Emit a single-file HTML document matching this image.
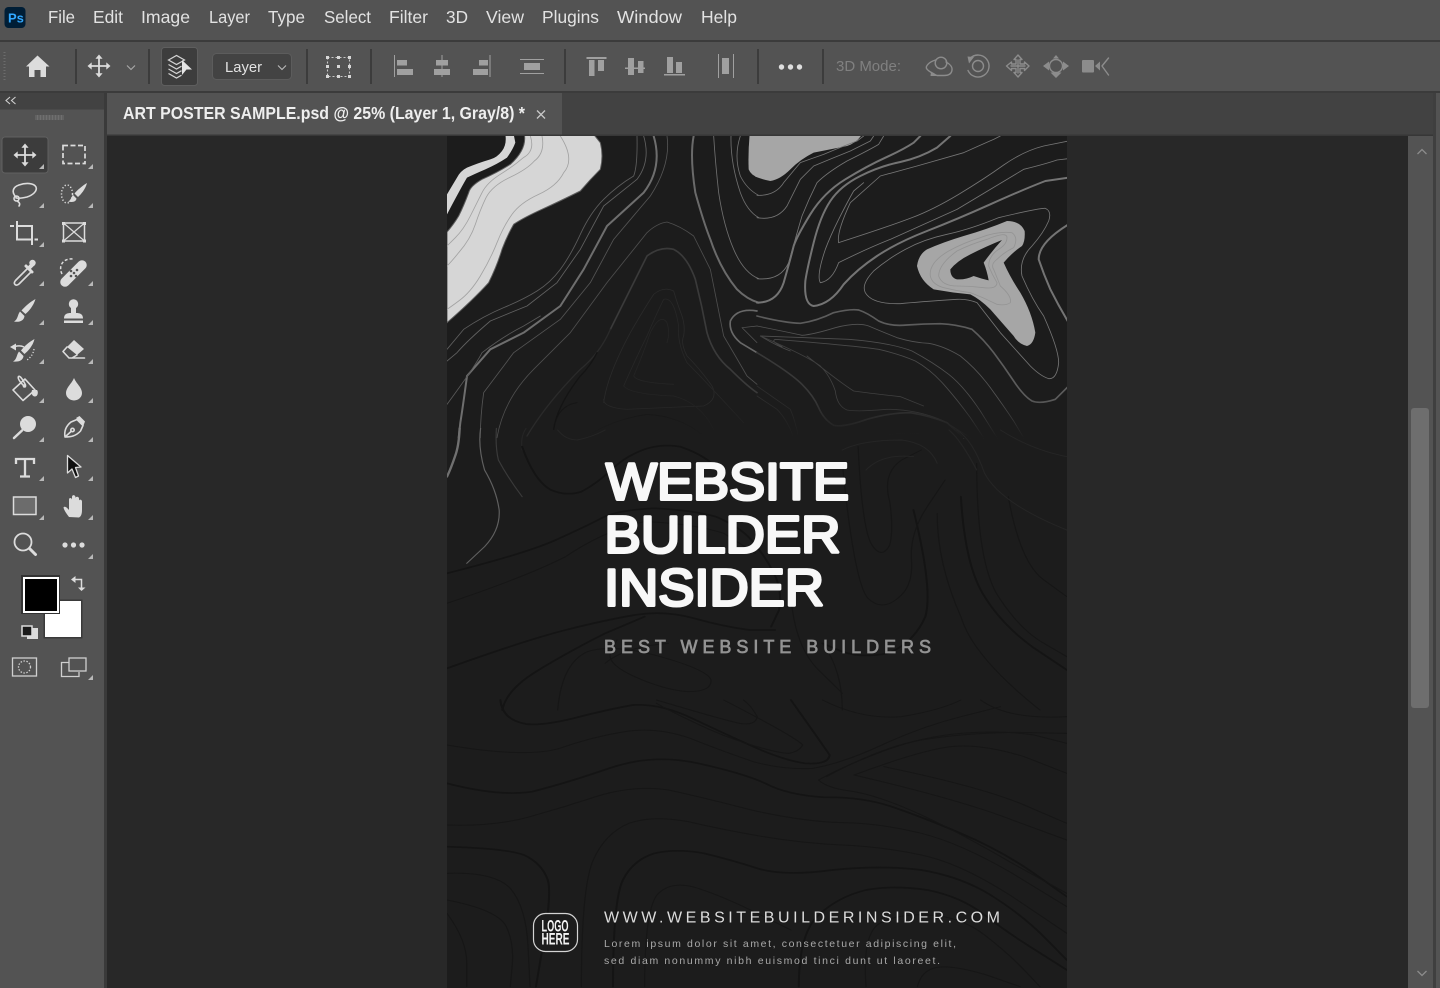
<!DOCTYPE html>
<html><head><meta charset="utf-8"><title>ART POSTER SAMPLE.psd</title>
<style>
html,body{margin:0;padding:0;background:#535353;overflow:hidden;width:1440px;height:988px}
svg{display:block;font-family:"Liberation Sans",sans-serif}
.l{fill:none;stroke-linecap:round;stroke-linejoin:round}
.ic{fill:none;stroke:#dcdcdc;stroke-width:1.6;stroke-linejoin:round;stroke-linecap:round}
.f{fill:#dcdcdc;stroke:none}
.a{fill:#a0a0a0}
.m{fill:#e2e2e2;font-size:17.5px}
.d{fill:none;stroke:#8c8c8c;stroke-width:1.4;stroke-linejoin:round;stroke-linecap:round}
.df{fill:#8c8c8c}
</style></head><body>
<svg width="1440" height="988" viewBox="0 0 1440 988" xmlns="http://www.w3.org/2000/svg">
<defs>
<path id="tri" d="M5 0V5H0Z" fill="#b8b8b8"/>
<g id="mv"><path d="M-8 0H8M0-8V8" fill="none" stroke="#dcdcdc" stroke-width="1.8"/><path d="M0-11.5l3.6 4.2h-7.2zM0 11.5l3.6-4.2h-7.2zM-11.5 0l4.2-3.6v7.2zM11.5 0l-4.2-3.6v7.2z" fill="#dcdcdc"/></g>
<clipPath id="pc"><rect x="0" y="0" width="620" height="852"/></clipPath>
<linearGradient id="fade" x1="0" y1="0" x2="0" y2="1"><stop offset="0" stop-color="#1c1c1c" stop-opacity="0"/><stop offset="1" stop-color="#1c1c1c" stop-opacity="1"/></linearGradient>
</defs>

<!-- chrome backgrounds -->
<rect width="1440" height="988" fill="#535353"/>
<rect x="0" y="40" width="1440" height="2" fill="#3b3b3b"/>
<rect x="0" y="91" width="1440" height="2" fill="#3b3b3b"/>
<rect x="107" y="93" width="1326" height="42" fill="#424242"/>
<rect x="107" y="135" width="1301" height="853" fill="#282828"/>
<rect x="104" y="93" width="3" height="895" fill="#3a3a3a"/>
<rect x="1433" y="93" width="3" height="895" fill="#3f3f3f"/>
<rect x="0" y="93" width="104" height="16" fill="#424242"/>
<rect x="0" y="109" width="104" height="1" fill="#4a4a4a"/>

<!-- menu -->
<rect x="4.5" y="7" width="21" height="21" rx="4" fill="#001e36"/>
<text x="8" y="22.5" font-size="13" font-weight="700" fill="#31a8ff">Ps</text>
<g class="m">
<text x="48" y="23" textLength="27" lengthAdjust="spacingAndGlyphs">File</text>
<text x="93" y="23" textLength="30" lengthAdjust="spacingAndGlyphs">Edit</text>
<text x="141" y="23" textLength="49" lengthAdjust="spacingAndGlyphs">Image</text>
<text x="209" y="23" textLength="41" lengthAdjust="spacingAndGlyphs">Layer</text>
<text x="268" y="23" textLength="37" lengthAdjust="spacingAndGlyphs">Type</text>
<text x="324" y="23" textLength="47" lengthAdjust="spacingAndGlyphs">Select</text>
<text x="389" y="23" textLength="39" lengthAdjust="spacingAndGlyphs">Filter</text>
<text x="446" y="23" textLength="22" lengthAdjust="spacingAndGlyphs">3D</text>
<text x="486" y="23" textLength="38" lengthAdjust="spacingAndGlyphs">View</text>
<text x="542" y="23" textLength="57" lengthAdjust="spacingAndGlyphs">Plugins</text>
<text x="617" y="23" textLength="65" lengthAdjust="spacingAndGlyphs">Window</text>
<text x="701" y="23" textLength="36" lengthAdjust="spacingAndGlyphs">Help</text>
</g>

<!-- options bar -->
<path d="M4.5 52V81" stroke="#6c6c6c" stroke-width="2" stroke-dasharray="1 2"/>
<path d="M26 66.5L37.5 55.5L49.5 66.5H46V77H40.5V70H34.5V77H29V66.5Z" class="f"/>
<g fill="#3c3c3c"><rect x="75" y="49" width="2" height="35"/><rect x="148" y="49" width="2" height="35"/><rect x="306" y="49" width="2" height="35"/><rect x="370" y="49" width="2" height="35"/><rect x="564" y="49" width="2" height="35"/><rect x="757" y="49" width="2" height="35"/><rect x="822" y="49" width="2" height="35"/></g>
<use href="#mv" x="99" y="66"/>
<path d="M127 65.5l4 4 4-4" fill="none" stroke="#aaa" stroke-width="1.1"/>
<rect x="161.5" y="47.5" width="36" height="38" rx="3" fill="#3d3d3d" stroke="#5e5e5e"/>
<g fill="none" stroke="#d4d4d4" stroke-width="1.2"><path d="M168.5 60l8-4.500 8 4.500-8 4.500z"/><path d="M168.500 64.500l8 4.500 5-2.800M168.500 69l8 4.500 5-2.800M168.500 73.500l8 4.500 5-2.800"/></g>
<path d="M182 60L192 69.500H186.500L182 75Z" fill="#e6e6e6"/>
<rect x="212.500" y="53.500" width="79" height="26" rx="4" fill="#434343" stroke="#5c5c5c"/>
<text x="225" y="72" font-size="15" fill="#e2e2e2" textLength="37" lengthAdjust="spacingAndGlyphs">Layer</text>
<path d="M278 65.500l4 4 4-4" fill="none" stroke="#bbb" stroke-width="1.1"/>
<g><rect x="327.500" y="57.500" width="22" height="19" fill="none" stroke="#c8c8c8" stroke-width="1.100" stroke-dasharray="2 2"/><g fill="#d8d8d8"><rect x="326" y="56" width="3" height="3"/><rect x="337" y="56" width="3" height="3"/><rect x="348" y="56" width="3" height="3"/><rect x="326" y="65" width="3" height="3"/><rect x="337" y="65" width="3" height="3"/><rect x="348" y="65" width="3" height="3"/><rect x="326" y="75" width="3" height="3"/><rect x="337" y="75" width="3" height="3"/><rect x="348" y="75" width="3" height="3"/></g></g>
<g class="a">
<rect x="394" y="55" width="1" height="22"/><rect x="397" y="60" width="10" height="5.500"/><rect x="397" y="69" width="16" height="6"/>
<rect x="441.500" y="55" width="1" height="22"/><rect x="436" y="60" width="12" height="5.500"/><rect x="434" y="69" width="16" height="6"/>
<rect x="489.500" y="55" width="1" height="22"/><rect x="479" y="60" width="9" height="5.500"/><rect x="473" y="69" width="15" height="6"/>
<rect x="520" y="59" width="24" height="1"/><rect x="520" y="73" width="24" height="1"/><rect x="524" y="63" width="16" height="7"/>
<rect x="586.500" y="57" width="20" height="2"/><rect x="589" y="60" width="5.500" height="16"/><rect x="598" y="60" width="6" height="11"/>
<rect x="625" y="67.500" width="20" height="1.500"/><rect x="628" y="58" width="6" height="17"/><rect x="638" y="61" width="5.500" height="12"/>
<rect x="664" y="74" width="21" height="1.500"/><rect x="667" y="57" width="6" height="16"/><rect x="676" y="62" width="6" height="11"/>
<rect x="718" y="54" width="1" height="24"/><rect x="733" y="54" width="1" height="24"/><rect x="722" y="58" width="7" height="16"/>
</g>
<g fill="#dedede"><circle cx="781.500" cy="67" r="2.700"/><circle cx="790.500" cy="67" r="2.700"/><circle cx="799.500" cy="67" r="2.700"/></g>
<text x="836" y="71" font-size="15" fill="#808080" textLength="65" lengthAdjust="spacingAndGlyphs">3D Mode:</text>
<!-- 3d icons -->
<circle cx="941" cy="63" r="5.800" class="d"/>
<path class="d" d="M935.500 60C929 62 925.500 66 926.500 68.500C928 71 932 73 934 74M946 62C950 64 952.500 67 952 70C951.500 74 948 75.500 944 75.500H937"/>
<path class="df" d="M931 71.500L939 76H930.500Z"/>
<path class="d" d="M970 58.500A11 11 0 1 1 968 70.500"/><circle cx="978" cy="66" r="5.500" class="d"/>
<path class="df" d="M967.500 56.500L969 63.500L974 57Z"/>
<path class="d" d="M1018 55L1022 59.500H1020V64H1024.500V62L1029 66L1024.500 70.500V68.500H1020V72.500H1022L1018 77L1014 72.500H1016V68.500H1011.500V70.500L1006.500 66L1011.500 62V64H1016V59.500H1014ZM1018 60V73M1011 66H1025"/>
<circle cx="1056" cy="66" r="6.500" class="d"/>
<path class="df" d="M1056 55l3 3.500h-6zM1056 78l5.500-5.500h-11zM1043 66l6-4.500v9zM1069 66l-6-4.500v9z"/>
<rect x="1082" y="60" width="12" height="12.500" rx="1" class="df"/>
<path class="df" d="M1095 66l5-4.500v9z"/>
<path class="d" d="M1108.500 58L1102 66L1108.500 75"/>

<!-- tab -->
<rect x="107" y="93" width="455" height="42" fill="#535353"/>
<text x="123" y="119" font-size="17.500" font-weight="700" fill="#eeeeee" textLength="402" lengthAdjust="spacingAndGlyphs">ART POSTER SAMPLE.psd @ 25% (Layer 1, Gray/8) *</text>
<path d="M537 110.500l8 8M545 110.500l-8 8" stroke="#c8c8c8" stroke-width="1.300"/>
<rect x="107" y="134.500" width="1326" height="1.500" fill="#373737"/>
<path d="M10 97l-4 3.500 4 3.500M15.500 97l-4 3.500 4 3.500" fill="none" stroke="#d0d0d0" stroke-width="1.100"/>
<g fill="#6f6f6f"><rect x="35" y="115" width="29" height="5"/></g>
<path d="M36 114.500V120.500M39 114.500V120.500M42 114.500V120.500M45 114.500V120.500M48 114.500V120.500M51 114.500V120.500M54 114.500V120.500M57 114.500V120.500M60 114.500V120.500M63 114.500V120.500" stroke="#535353" stroke-width="1"/>

<!-- scrollbar -->
<rect x="1411" y="408" width="18" height="300" rx="3" fill="#6e6e6e"/>
<path d="M1417.500 154l4.500-4.500 4.500 4.500" fill="none" stroke="#8c8c8c" stroke-width="1.300"/>
<path d="M1417.500 971l4.500 4.500 4.500-4.500" fill="none" stroke="#8c8c8c" stroke-width="1.300"/>

<!-- poster -->
<g transform="translate(447,136)" clip-path="url(#pc)">
<rect width="620" height="852" fill="#1c1c1c"/>
<!-- zoom5 region -->
<g transform="scale(.33333)">
<path fill="#d6d6d6" stroke="#5c5c5c" stroke-width="3" d="M232 -5Q240 40 190 85Q150 110 105 130Q70 150 65 170Q50 210 35 240Q20 265 0 288V560Q80 490 125 440Q150 390 165 340Q180 300 200 265Q230 245 285 220Q340 195 400 165Q430 130 460 100Q470 60 460 20L440 -5Z"/>
<path fill="#d6d6d6" d="M175 -5Q180 25 165 45Q150 65 130 70Q90 82 60 95Q40 105 30 125Q15 150 0 175V235Q45 150 60 125Q80 115 115 100Q150 85 180 65Q198 40 205 20L200 -5Z"/>
<g class="l" stroke="#a2a2a2" stroke-width="2.500">
<path d="M250 0Q265 45 229 65Q200 90 160 115Q120 140 105 170Q90 200 70 240Q50 280 25 305Q10 320 0 330"/>
<path d="M285 0Q295 50 262 75Q240 100 187 125Q135 150 117 185Q100 220 85 265Q70 310 35 350Q15 375 0 390"/>
<path d="M340 0Q385 70 350 110Q330 150 275 175Q220 200 195 235Q170 270 150 320Q130 370 100 420Q70 470 35 495Q15 510 0 520"/>
</g>
<path d="M908 -5Q903 50 905 100Q912 118 935 125L940 -5Z" fill="#a6a6a6"/>
<g class="l">
<path stroke="#5e5e5e" stroke-width="2.500" d="M570 0Q572 90 560 120Q510 150 470 190Q430 230 400 295Q370 360 340 400Q310 440 270 465Q230 490 170 515Q110 540 50 580L0 640"/>
<path stroke="#626262" stroke-width="2.500" d="M590 0Q612 75 570 130Q520 170 470 210Q435 275 400 340Q365 390 330 440Q285 475 240 510Q185 532 130 555Q60 615 30 650L0 675"/>
<path stroke="#6e6e6e" stroke-width="6" d="M620 0Q648 95 590 170Q535 220 480 270Q445 335 410 400Q375 455 340 510Q285 550 230 590Q180 615 130 640Q95 680 60 720Q48 810 40 860L35 905"/>
<path stroke="#555" stroke-width="2.500" d="M660 0Q672 85 610 180Q555 245 500 310Q465 375 430 440Q385 495 340 550Q270 600 200 650Q155 710 110 770Q100 840 100 905"/>
<path stroke="#5a5a5a" stroke-width="2.500" d="M0 805Q85 690 105 650Q170 600 230 570L280 540"/>
<path stroke="#4e4e4e" stroke-width="2.500" d="M150 905Q170 790 260 700Q315 645 370 590Q425 515 480 440Q540 365 600 290Q630 262 660 258Q700 270 740 300Q765 350 790 400Q810 500 830 600Q880 685 900 720L930 745"/>
<path stroke="#3a3a3a" stroke-width="5" d="M490 580Q570 420 600 360Q640 330 680 340Q720 360 745 430Q765 510 780 590Q800 660 850 700Q900 750 930 770"/>
<path stroke="#2a2a2a" stroke-width="4" d="M240 900Q300 800 400 700Q460 650 490 580"/>
<path stroke="#141414" stroke-width="4" d="M320 880Q330 810 400 720Q430 690 450 650"/>
<path stroke="#2a2a2a" stroke-width="2.500" d="M470 800Q480 720 550 590Q590 520 620 475Q650 450 680 465Q690 500 705 540Q715 570 710 600Q700 620 720 660Q760 700 795 750Q815 790 770 810Q640 815 540 820Q470 815 470 790"/>
<path stroke="#272727" stroke-width="2.500" d="M530 750Q565 670 600 600Q630 530 650 490Q680 480 695 570Q690 620 720 680Q770 730 890 860"/>
<path stroke="#252525" stroke-width="2.500" d="M560 720Q590 650 610 590Q640 530 660 560Q670 590 660 620M560 720Q570 740 680 745"/>
<path stroke="#242424" stroke-width="2.500" d="M530 750Q550 775 680 780Q760 800 800 880"/>
<path stroke="#151515" stroke-width="3" d="M320 880Q330 810 390 800M420 900Q500 850 600 835Q700 840 770 900"/>
<path stroke="#6a6a6a" stroke-width="6" d="M740 0Q728 60 745 170Q770 260 790 310Q820 400 870 460Q900 490 935 500"/>
<path stroke="#707070" stroke-width="2.500" d="M800 0Q805 80 815 170Q830 270 860 340Q890 410 935 428"/>
<path stroke="#707070" stroke-width="2.500" d="M852 0Q850 80 880 170Q900 225 935 245"/>
<path stroke="#707070" stroke-width="2.500" d="M880 0Q860 60 880 120Q900 160 935 178"/>
<path stroke="#686868" stroke-width="5" d="M930 525Q870 515 850 555Q845 590 880 620L930 650"/>
<path stroke="#585858" stroke-width="2" d="M885 575L930 570M885 575L930 620"/>
</g>
</g>
<!-- zoom6 region -->
<g transform="translate(310,0) scale(.33333)">
<path fill="#a6a6a6" d="M-5 -5H315Q300 20 270 30Q220 40 170 50Q130 70 100 100Q70 130 40 135Q15 130 -5 122Z"/>
<path fill="#a6a6a6" d="M480 390Q485 355 510 340Q560 318 620 300Q690 280 750 255Q790 255 803 285Q805 315 795 330Q765 350 740 380Q760 425 790 470Q825 530 835 590Q830 625 810 630Q785 625 770 600Q735 560 700 520Q670 490 640 475Q585 470 530 460Q490 435 480 390Z"/>
<path fill="#1c1c1c" d="M735 312Q690 330 640 355Q600 375 580 400Q580 425 600 430Q625 432 650 420Q672 428 695 433Q690 405 680 380Q705 345 735 312Z"/>
<g class="l">
<g stroke="#949494" stroke-width="2.500">
<path d="M520 420Q515 380 575 345Q620 320 670 305Q720 285 765 290Q785 305 770 335Q740 350 720 370Q700 385 710 400Q720 425 730 450Q765 480 760 500Q745 510 720 505Q680 485 640 470Q600 465 560 455Q525 445 520 420Z"/>
<path d="M545 420Q545 385 600 345Q640 325 690 310Q750 285 750 305Q750 325 725 340Q695 360 695 390Q705 415 720 440Q720 460 680 455Q640 450 600 450Q555 450 545 420Z"/>
</g>
<g stroke="#767676" stroke-width="2.500">
<path d="M0 428Q70 435 95 380Q120 290 135 240Q155 190 180 140Q210 110 270 75Q340 40 365 25L380 0"/>
<path d="M0 178Q55 180 80 140Q105 110 130 80Q165 67 200 55Q260 30 300 15L320 0"/>
<path d="M0 245Q60 255 90 210Q110 170 130 130Q150 110 170 90Q225 67 280 45Q320 25 340 15L350 0"/>
<path d="M245 320Q238 290 280 200Q325 160 370 120Q425 105 480 90Q550 70 620 50Q675 25 710 10L730 0"/>
<path d="M245 320Q400 270 465 245Q530 220 605 175Q680 130 740 87Q800 45 860 30L935 15"/>
<path d="M190 440Q178 420 205 340Q220 300 245 250Q270 200 290 165L320 140"/>
<path d="M190 440Q225 435 245 380Q325 340 400 310Q500 265 600 220Q700 160 800 100Q865 84 900 72L935 68"/>
<path d="M725 245Q850 215 865 217Q885 225 875 255Q860 290 825 330Q785 370 795 420Q825 490 860 540Q905 640 905 680Q900 730 875 728Q850 720 820 690Q775 640 730 590Q695 545 660 500Q630 488 600 490Q480 498 430 503Q345 505 325 470Q312 445 350 405Q390 370 445 340Q500 310 570 295Q640 280 725 245Z"/>
</g>
<g stroke="#747474" stroke-width="6">
<path d="M0 500Q60 500 80 440Q100 370 110 330Q120 300 160 235Q200 170 265 130Q330 90 385 65Q440 40 470 20L490 0"/>
<path d="M170 510Q140 505 145 435Q150 400 170 320Q190 240 220 195Q250 150 310 120Q370 90 430 78Q490 65 540 35L580 0"/>
<path d="M170 510Q220 505 260 445Q300 400 360 360Q420 320 510 285Q600 250 700 205Q800 160 865 135L935 125"/>
<path d="M935 265Q845 320 845 370Q860 415 880 460Q905 510 935 560"/>
</g>
<path stroke="#5c5c5c" stroke-width="5" d="M0 540Q80 560 130 562Q180 555 230 530Q280 518 305 522Q330 530 365 555Q400 572 450 567Q500 563 550 563Q600 565 645 580Q680 610 710 650Q740 690 770 735Q800 780 825 795Q850 805 895 790L935 750"/>
<path stroke="#545454" stroke-width="2.500" d="M0 570Q100 590 135 598Q170 595 235 575Q300 558 335 570Q370 585 420 605Q470 620 515 622Q560 630 610 660Q660 700 700 755Q740 810 770 855L800 905"/>
<path stroke="#4f4f4f" stroke-width="2.500" d="M10 600Q150 605 275 610Q400 620 465 645Q530 680 575 715Q620 750 670 825L720 905"/>
<path stroke="#4a4a4a" stroke-width="2.500" d="M55 610Q300 630 365 640Q430 655 475 675Q520 700 560 745Q600 790 640 845L680 905M55 610Q40 615 75 632M10 600Q60 630 100 645"/>
<path stroke="#404040" stroke-width="2.500" d="M10 600Q150 660 190 690Q220 720 235 765Q240 810 270 822Q300 828 390 820Q480 820 560 855L640 905M150 660Q250 740 290 765Q340 772 430 782L500 810"/>
<path stroke="#383838" stroke-width="5" d="M0 650Q100 710 135 745Q170 780 185 815Q200 850 230 868Q260 875 330 850Q400 830 460 830Q520 840 570 860L620 905"/>
<path stroke="#2e2e2e" stroke-width="2.500" d="M0 750Q50 785 100 820Q115 855 125 905M0 780Q30 800 60 820Q90 850 110 905"/>
<path stroke="#262626" stroke-width="2.500" d="M380 900Q440 885 500 895"/>
</g>
</g>
<rect x="120" y="262" width="500" height="40" fill="url(#fade)"/>
<!-- zoom7 region -->
<g transform="translate(0,294) scale(.3953,.33333)">
<g class="l">
<path stroke="#707070" stroke-width="6" d="M32 -5Q30 50 20 80Q10 115 0 140"/>
<path stroke="#606060" stroke-width="3" d="M85 -5Q78 50 95 120Q125 180 132 240Q135 300 95 350L50 400"/>
<path stroke="#3a3a3a" stroke-width="3" d="M125 -5Q122 50 130 90Q155 145 190 200"/>
<path stroke="#252525" stroke-width="3" d="M200 -5Q185 20 190 60"/>
<g stroke="#141414" stroke-width="5">
<path d="M190 50Q220 150 260 178Q300 200 340 185Q380 160 415 120Q450 80 495 60Q540 40 590 50Q640 70 670 100L700 130"/>
<path d="M0 430Q200 370 275 330Q350 290 390 265Q430 240 525 235Q620 240 680 260Q740 290 770 330Q800 370 825 425Q850 480 840 540L820 590"/>
<path d="M0 715Q200 630 300 600Q400 570 475 555Q550 540 625 565Q700 590 765 600L830 600"/>
<path d="M140 840Q150 780 225 725Q300 670 400 610L500 560"/>
<path d="M1300 200Q1310 400 1355 490Q1400 580 1480 650L1568 720"/>
<path d="M1180 240Q1230 480 1210 560Q1180 640 1115 670Q1050 685 1000 665L950 640"/>
</g>
<g stroke="#161616" stroke-width="3">
<path d="M0 520Q200 440 300 380Q400 300 500 275Q620 280 700 310L780 370"/>
<path d="M280 840Q290 700 355 665Q420 640 540 680Q660 720 668 750Q670 785 610 785Q550 780 475 740Q400 700 415 665L430 630"/>
<path d="M400 700Q450 650 560 640"/>
<path d="M1040 50Q1050 300 1075 345Q1100 390 1120 345Q1130 300 1120 215Q1100 130 1150 90L1200 60"/>
<path d="M1000 100Q1030 460 1065 505Q1100 545 1140 505Q1180 470 1175 390Q1170 310 1215 230L1260 150"/>
<path d="M1340 100Q1340 400 1395 500Q1450 600 1510 640L1568 680"/>
<path d="M1420 200Q1450 400 1510 450L1568 500"/>
<path d="M870 500Q880 650 940 720L1000 790"/>
<path d="M1240 250Q1240 400 1300 560Q1330 680 1500 840"/>
<path d="M950 640Q1000 720 1000 840"/>
</g>
<g stroke="#252525" stroke-width="3">
<path d="M280 0Q300 30 330 30Q370 20 400 0"/>
<path d="M1000 60Q1050 30 1150 30Q1220 40 1240 100"/>
<path d="M1060 120Q1100 70 1180 80"/>
<path d="M1270 0Q1300 30 1340 120"/>
<path d="M1290 0Q1330 30 1360 130Q1400 220 1568 300"/>
<path d="M1400 0Q1480 60 1568 80"/>
</g>
</g>
</g>
<!-- zoom8 region -->
<g transform="translate(0,564) scale(.3953,.33333)">
<g class="l">
<g stroke="#141414" stroke-width="5">
<path d="M135 0Q140 60 200 72Q240 78 320 55Q400 30 470 15Q540 10 620 55Q700 100 775 140Q850 180 905 190Q965 195 968 165Q930 100 900 50L870 0"/>
<path d="M0 250Q130 290 215 275Q300 250 410 205Q520 160 635 190Q750 220 805 250Q860 285 955 292Q1050 290 1125 320Q1200 350 1300 400Q1400 450 1485 520L1568 590"/>
<path d="M0 440Q150 445 195 465Q240 490 255 540Q265 580 245 720L225 860"/>
<path d="M420 860Q420 600 445 540Q470 480 525 460Q580 445 650 460Q720 480 785 505Q850 530 975 510Q1100 495 1200 510Q1300 530 1375 585Q1450 640 1510 710L1568 780"/>
<path d="M890 860Q890 700 940 645Q990 590 1060 570Q1130 555 1215 570Q1300 590 1360 645Q1420 700 1495 755L1568 810"/>
</g>
<g stroke="#161616" stroke-width="3">
<path d="M0 135Q200 175 285 145Q370 110 450 95Q530 80 615 115Q700 155 775 185Q850 210 925 205Q1000 190 1100 135Q1200 80 1300 50L1400 20"/>
<path d="M0 375Q120 380 210 350Q300 320 390 285Q480 255 560 270Q640 290 770 330Q900 365 1000 368Q1100 370 1200 400Q1300 430 1430 520L1568 620"/>
<path d="M340 860Q340 560 370 480Q400 400 460 370Q520 345 610 365Q700 390 800 410Q900 430 1000 435Q1100 440 1200 465Q1300 490 1430 590L1568 700"/>
<path d="M940 240Q1000 200 1100 155Q1200 110 1300 100Q1400 90 1485 105L1568 130"/>
<path d="M960 230Q1100 140 1200 120Q1300 100 1430 97L1568 100"/>
<path d="M1030 225Q1200 150 1275 140Q1350 130 1460 170L1568 220"/>
<path d="M1030 225Q1300 300 1430 360L1568 420"/>
<path d="M1105 200Q1350 260 1460 315L1568 370"/>
<path d="M940 240Q960 265 1030 275Q1100 290 1200 345Q1300 400 1430 490L1568 580"/>
<path d="M0 520Q120 515 160 565Q200 620 205 740L210 860"/>
<path d="M0 600Q130 630 150 680Q170 730 165 795L160 860"/>
<path d="M0 640Q50 720 50 790L50 860"/>
<path d="M500 860Q500 620 535 580Q570 540 635 565Q700 590 785 640L870 690"/>
<path d="M1190 860Q1200 810 1240 802Q1280 795 1365 825L1450 860"/>
<path d="M1060 860Q1050 700 1095 670Q1140 640 1220 645Q1300 650 1360 705Q1420 760 1460 810L1500 860"/>
<path d="M530 0Q700 60 740 70Q780 78 785 50Q770 20 760 10L750 0"/>
<path d="M700 0Q880 110 900 135Q890 155 865 160Q840 160 770 135Q700 110 630 70Q560 30 545 20L530 10"/>
<path d="M950 0Q1050 60 1150 50Q1250 30 1300 0"/>
<path d="M1350 0Q1420 60 1568 50"/>
</g>
</g>
</g>
<!-- poster text -->
<g font-weight="400" fill="#f8f8f8" stroke="#f8f8f8" stroke-width="3" stroke-linejoin="round" stroke-linecap="round" font-size="52.300">
<text x="159" y="363.500" textLength="243" lengthAdjust="spacingAndGlyphs">WEBSITE</text>
<text x="157.500" y="416.500" textLength="236" lengthAdjust="spacingAndGlyphs">BUILDER</text>
<text x="157" y="469.500" textLength="220" lengthAdjust="spacingAndGlyphs">INSIDER</text>
</g>
<text x="157" y="517" font-size="18" fill="#939393" stroke="#939393" stroke-width=".7" textLength="327">BEST WEBSITE BUILDERS</text>
<text x="157" y="786.500" font-size="16" fill="#dcdcdc" textLength="396">WWW.WEBSITEBUILDERINSIDER.COM</text>
<text x="157" y="811" font-size="10.500" fill="#a9a9a9" textLength="352">Lorem ipsum dolor sit amet, consectetuer adipiscing  elit,</text>
<text x="157" y="828" font-size="10.500" fill="#a9a9a9" textLength="336">sed diam nonummy nibh euismod tinci dunt ut laoreet.</text>
<rect x="86.500" y="777.500" width="44" height="38" rx="12" fill="#1c1c1c" stroke="#d4d4d4" stroke-width="1.200"/>
<text x="94.500" y="795.500" font-size="16.500" font-weight="700" fill="#f5f5f5" textLength="27" lengthAdjust="spacingAndGlyphs">LOGO</text>
<text x="94.500" y="808.500" font-size="16.500" font-weight="700" fill="#f5f5f5" textLength="28" lengthAdjust="spacingAndGlyphs">HERE</text>
</g>

<!-- toolbar -->
<rect x="2" y="137" width="46" height="36" rx="3" fill="#3c3c3c" stroke="#606060"/>
<use href="#mv" x="25" y="155"/>
<!-- triangles -->
<g>
<use href="#tri" x="39" y="164"/><use href="#tri" x="88" y="164"/>
<use href="#tri" x="39" y="203"/><use href="#tri" x="88" y="203"/>
<use href="#tri" x="39" y="242"/>
<use href="#tri" x="39" y="281"/><use href="#tri" x="88" y="281"/>
<use href="#tri" x="39" y="320"/><use href="#tri" x="88" y="320"/>
<use href="#tri" x="39" y="359"/><use href="#tri" x="88" y="359"/>
<use href="#tri" x="39" y="398"/><use href="#tri" x="88" y="398"/>
<use href="#tri" x="39" y="437"/><use href="#tri" x="88" y="437"/>
<use href="#tri" x="39" y="476"/><use href="#tri" x="88" y="476"/>
<use href="#tri" x="39" y="515"/><use href="#tri" x="88" y="515"/>
<use href="#tri" x="88" y="554"/>
<use href="#tri" x="88" y="675"/>
</g>
<!-- marquee -->
<rect x="63" y="145.500" width="22" height="18" fill="none" stroke="#dcdcdc" stroke-width="1.700" stroke-dasharray="5 2.500"/>
<!-- lasso -->
<path class="ic" d="M16 197C11 192 13 187 19 185C26 182.500 34 183 36 187C37.500 191 33 195 27 197C23 198 19 198.500 16 198M14 198.500a2.500 2.500 0 1 0 5 0a2.500 2.500 0 1 0-5 0M17 201Q21 203 19 206"/>
<!-- quick select -->
<ellipse cx="67" cy="194" rx="5.500" ry="9" fill="none" stroke="#dcdcdc" stroke-width="1.500" stroke-dasharray="1.200 2"/>
<path class="f" d="M87 183C85.500 189 81 194.500 78 197L74.500 193.500C77.500 190 82 186 87 183ZM73 195L76.500 198.500C76 202 72.500 202.500 68 201.500C71 200.500 71 197 73 195Z"/>
<!-- crop -->
<path fill="none" stroke="#dcdcdc" stroke-width="2" d="M10 226H14M17 221V239.500H32M17 226H32V245M34.500 239.500H38"/>
<!-- frame -->
<g><rect x="63.500" y="223" width="21" height="18" fill="none" stroke="#dcdcdc" stroke-width="1.500"/><path d="M63.500 223L84.500 241M84.500 223L63.500 241" stroke="#dcdcdc" stroke-width="1.200"/><g class="f"><rect x="62" y="222" width="3" height="3"/><rect x="83" y="222" width="3" height="3"/><rect x="62" y="239.500" width="3" height="3"/><rect x="83" y="239.500" width="3" height="3"/></g></g>
<!-- eyedropper -->
<path class="ic" d="M27 269L15.500 280.500Q13.500 283 15 284.500Q16.500 286 19 284L30.500 272.500"/>
<circle cx="32.500" cy="263" r="3.200" class="f"/>
<path d="M26 266L32 272" stroke="#dcdcdc" stroke-width="3" stroke-linecap="round"/><path d="M29 268L33 264" stroke="#dcdcdc" stroke-width="4"/>
<!-- healing -->
<path d="M65 282L82 265" stroke="#dcdcdc" stroke-width="9.500" stroke-linecap="round"/>
<g fill="#535353"><circle cx="71" cy="276" r="1.300"/><circle cx="74" cy="273" r="1.300"/><circle cx="77" cy="270" r="1.300"/><circle cx="71" cy="271" r="1.300"/><circle cx="76" cy="276" r="1.300"/></g>
<path d="M62 274C58 266 63 258 73 259" fill="none" stroke="#dcdcdc" stroke-width="1.500" stroke-dasharray="3 2"/>
<!-- brush -->
<path class="f" d="M35.500 299C33.500 306 28.500 311.500 25.500 314L21.500 310.500C25 306.500 30 302 35.500 299ZM20 311.500L24.500 316C24 321 19 322.500 14 321.500C18 319.500 17.500 314.500 20 311.500Z"/>
<!-- stamp -->
<circle cx="73.500" cy="304" r="4.700" class="f"/>
<path class="f" d="M71 307H76V313C80 313 83 314 83 318.500H64C64 314 67 313 71 313ZM64 320.500H83V323H64Z"/>
<!-- history brush -->
<path class="f" d="M34.500 339C33 346 27.500 351.500 24.500 354L21 350.500C24 346.500 29 342 34.500 339ZM19 351.500L23.500 356C23 361 18 362 13 361.500C17 359.500 16.500 354.500 19 351.500Z"/>
<path class="f" d="M10 347L16 343.500V350.500Z"/>
<path d="M15 346.500Q20 345 24 347" fill="none" stroke="#dcdcdc" stroke-width="1.500"/>
<path d="M34 349Q33 356 27 360" fill="none" stroke="#dcdcdc" stroke-width="1.300" stroke-dasharray="1.200 1.800"/>
<!-- eraser -->
<path class="f" d="M74 340L84 349L77 355L67 347Z"/>
<path class="ic" d="M67 347L63 351.500L69 358H84.500M77 355L72 358"/>
<!-- bucket -->
<path class="ic" d="M25 379L35 390L23 400.500L13 390L25 379Z"/>
<path class="ic" d="M24 386Q17 379 18.500 376.500Q20.500 375 25.500 385"/>
<circle cx="24.500" cy="386" r="1.800" class="f"/>
<path class="f" d="M32 390H37C38.500 391.500 38 396.500 35 396.500C32 396.500 31 393 32 390Z"/>
<!-- drop -->
<path class="f" d="M74 378C76.500 384 82 387.500 82 393A8 7.500 0 0 1 66 393C66 387.500 71.500 384 74 378Z"/>
<!-- dodge -->
<circle cx="28" cy="424" r="8" class="f"/>
<path d="M14 438L22 430.500" stroke="#dcdcdc" stroke-width="2.500" stroke-linecap="round"/>
<!-- pen -->
<path class="ic" d="M65 437C64 431 66 426 71 422L77 419.500L83 425.500L80.500 431C76 436 71 437 65 437ZM65 437L71 431.500"/>
<circle cx="72.500" cy="430" r="1.700" class="ic"/>
<path class="f" d="M76 418L79.500 416L85 421.500L83.500 425.500Z"/>
<!-- T -->
<path fill="none" stroke="#dcdcdc" stroke-width="2.300" d="M16 464V459H34V464M25 459V476.500M20 476.500H30"/>
<!-- arrow -->
<path fill="#111" stroke="#dcdcdc" stroke-width="1.300" stroke-linejoin="round" d="M67.500 455.500V473L72 469L75.500 477.500L78.500 476L75.500 467.500L81 467Z"/>
<!-- rect -->
<rect x="13.500" y="497" width="22.500" height="17.500" fill="#6c6c6c" stroke="#dcdcdc" stroke-width="1.500"/>
<!-- hand -->
<path class="f" d="M69 517C66 513 64 510 63.500 507.500C64.500 506 66.500 507 69 510V499.500C69 497.500 71.500 497.500 72 499.500V497C72 494.500 75 494.500 75.500 497V498C76 496 79 496.500 79 498.500V500.500C79.500 499 82 499.500 82 501.500V510C82 514 81 516.500 79 517.500Z"/>
<!-- zoom -->
<circle cx="23" cy="542" r="8.500" fill="none" stroke="#dcdcdc" stroke-width="1.800"/>
<path d="M29.500 548.500L35.500 554.500" stroke="#dcdcdc" stroke-width="3" stroke-linecap="round"/>
<!-- dots -->
<g class="f"><circle cx="65" cy="545" r="2.600"/><circle cx="73.500" cy="545" r="2.600"/><circle cx="82" cy="545" r="2.600"/></g>
<!-- colours -->
<rect x="43.500" y="599.500" width="39" height="39" fill="#3a3a3a"/>
<rect x="45" y="601" width="36" height="36" fill="#fff"/>
<rect x="21" y="575" width="39" height="39" fill="#333"/>
<rect x="23" y="577" width="36" height="36" fill="#fff"/>
<rect x="25" y="579" width="32" height="32" fill="#000"/>
<path fill="none" stroke="#dcdcdc" stroke-width="1.500" d="M74 579.500H81.500V588.500"/>
<path class="f" d="M71 579.500L75.500 576V583ZM78 587.500H85.500L81.500 591Z"/>
<rect x="27" y="628" width="11" height="11" fill="#dcdcdc"/>
<rect x="22" y="626" width="10" height="10" fill="#1a1a1a" stroke="#dcdcdc" stroke-width="1.500"/>
<!-- quick mask / screen -->
<rect x="12.500" y="658" width="24" height="18" fill="none" stroke="#cfcfcf" stroke-width="1.300"/>
<circle cx="24.500" cy="667" r="6" fill="none" stroke="#cfcfcf" stroke-width="1.300" stroke-dasharray="1.500 1.500"/>
<path fill="none" stroke="#cfcfcf" stroke-width="1.300" d="M69 662.500H61.500V676.500H79V672"/>
<rect x="69" y="658" width="17" height="13" fill="#535353" stroke="#cfcfcf" stroke-width="1.300"/>
</svg>
</body></html>
